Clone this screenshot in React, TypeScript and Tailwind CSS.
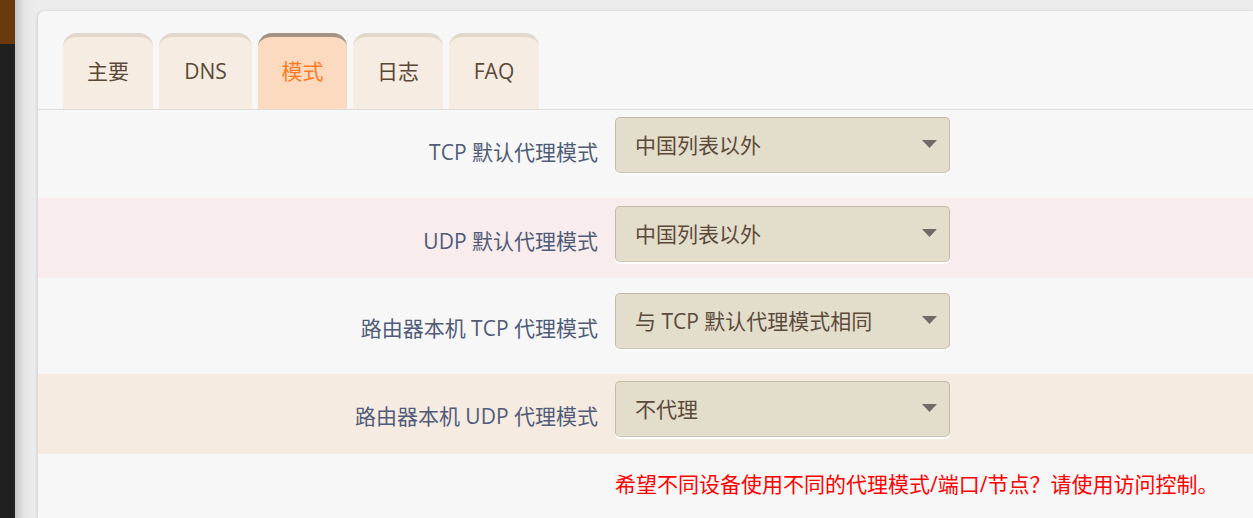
const FONT = { fontFamily: '"Open Sans", "Noto Sans CJK SC", sans-serif' };

const tabs = [
  { label: "主要", w: "w-[90px]" },
  { label: "DNS", w: "w-[93px]" },
  { label: "模式", w: "w-[89px]", active: true },
  { label: "日志", w: "w-[90px]" },
  { label: "FAQ", w: "w-[90px]" },
];

const rows = [
  { label: "TCP 默认代理模式", value: "中国列表以外", bg: "bg-[#f7f7f7]", pad: "pt-[7px] pb-[25px]" },
  { label: "UDP 默认代理模式", value: "中国列表以外", bg: "bg-[#f9ecec]", pad: "pt-[8px] pb-[16px]" },
  { label: "路由器本机 TCP 代理模式", value: "与 TCP 默认代理模式相同", bg: "bg-[#f7f7f7]", pad: "pt-[15px] pb-[25px]" },
  { label: "路由器本机 UDP 代理模式", value: "不代理", bg: "bg-[#f6ebe1]", pad: "pt-[7px] pb-[17px]" },
];

function Select({ value }: { value: string }) {
  return (
    <div className="flex h-[56px] w-[335px] items-center justify-between rounded-[5px] border border-[#c3baa8] border-b-[#cfc7b6] bg-[#e3ddcc] pl-[19px] pr-[12px] text-[21px] leading-none text-[#5b4a3a] shadow-[0_2px_0_#ffffff]">
      <span className="mt-[1px]">{value}</span>
      <svg width="15" height="8" viewBox="0 0 15 8" className="-mt-[3px]">
        <path d="M0 0 H15 L7.5 8 Z" fill="#6e6b67" />
      </svg>
    </div>
  );
}

export default function App() {
  return (
    <div className="flex h-[518px] w-[1253px] overflow-hidden bg-[#ececec]" style={FONT}>
      <div className="flex w-[15px] shrink-0 flex-col">
        <div className="h-[44px] bg-[#6b3a0c]" />
        <div className="flex-1 bg-[#202020]" />
      </div>
      <div className="flex flex-1 bg-[linear-gradient(to_right,#c6c6c6,#e6e6e6_10px,#ececec_20px)] pl-[23px] pt-[11px]">
        <div className="flex flex-1 flex-col rounded-tl-[7px] bg-[#f7f7f7] shadow-[-1px_0_3px_rgba(0,0,0,0.12)]">
          <div className="flex gap-[6px] border-b border-[#dcdcdc] pl-[25px] pt-[22px]">
            {tabs.map((t) => (
              <div
                key={t.label}
                className={`flex h-[76px] items-center justify-center rounded-t-[14px] border-t-[4px] text-[21px] leading-none ${t.w} ${
                  t.active
                    ? "border-[#a69282] bg-[#fbdac0] text-[#ff7a1f]"
                    : "border-[#e2d7ca] bg-[#f7ece2] text-[#5a4838]"
                }`}
              >
                <span className="-mt-[3px]">{t.label}</span>
              </div>
            ))}
          </div>

          {rows.map((r) => (
            <div key={r.label} className={`flex items-center ${r.bg} ${r.pad}`}>
              <div className="w-[560px] pt-[14px] text-right text-[21px] leading-none text-[#505b78]">{r.label}</div>
              <div className="ml-[17px]">
                <Select value={r.value} />
              </div>
            </div>
          ))}

          <div className="pl-[577px] pt-[20px] text-[21px] leading-none text-[#ff0000]">
            希望不同设备使用不同的代理模式/端口/节点？请使用访问控制。
          </div>
        </div>
      </div>
    </div>
  );
}
